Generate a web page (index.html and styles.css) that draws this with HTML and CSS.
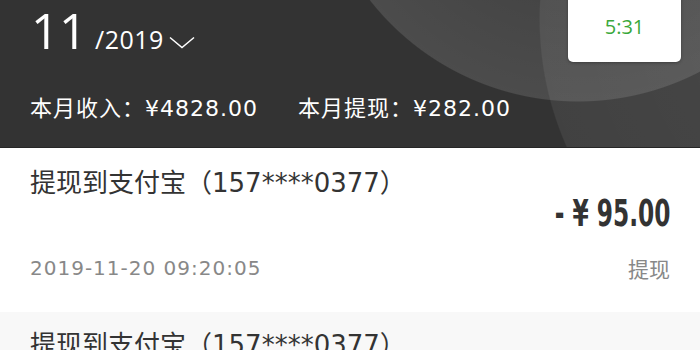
FILE: index.html
```html
<!DOCTYPE html>
<html lang="zh-CN">
<head>
<meta charset="utf-8">
<link rel="stylesheet" href="styles.css">
</head>
<body>
<div class="header">
  <div class="month-row">
    <span class="month">11</span>
    <span class="year">/2019</span>
    <svg class="chevron" width="26" height="13" viewBox="0 0 26 13"><path d="M1 1.5 L13 11.5 L25 1.5" fill="none" stroke="#fff" stroke-width="1.5"/></svg>
  </div>
  <div class="summary">
    <span>本月收入：¥4828.00</span>
    <span>本月提现：¥282.00</span>
  </div>
  <div class="time-card">5:31</div>
</div>
<div class="list">
  <div class="item">
    <div class="title">提现到支付宝（157****0377）</div>
    <div class="amount-row"><span class="amount">- ¥ 95.00</span></div>
    <div class="meta"><span class="date">2019-11-20 09:20:05</span><span class="type">提现</span></div>
  </div>
  <div class="item alt">
    <div class="title">提现到支付宝（157****0377）</div>
    <div class="amount-row"><span class="amount">- ¥ 95.00</span></div>
    <div class="meta"><span class="date">2019-11-20 09:20:05</span><span class="type">提现</span></div>
  </div>
</div>
</body>
</html>
```

FILE: styles.css
```css
html, body {
  margin: 0;
  padding: 0;
  background: #fff;
  font-family: "DejaVu Sans", "Noto Sans CJK SC", sans-serif;
  overflow: hidden;
}
.header {
  position: relative;
  height: 148px;
  box-sizing: border-box;
  border-bottom: 1px solid #262626;
  background:
    radial-gradient(circle 265px at 578px -163px, rgba(255,255,255,0.08) 50%, rgba(255,255,255,0.12) 99.6%, rgba(255,255,255,0) 100%),
    radial-gradient(circle 316px at 855px 19px, rgba(255,255,255,0.09) 40%, rgba(255,255,255,0.07) 99.6%, rgba(255,255,255,0) 100%),
    #333333;
  color: #fff;
  padding: 0 30px;
  display: flex;
  flex-direction: column;
}
.month-row {
  display: flex;
  align-items: baseline;
  height: 60px;
  font-family: "Open Sans", sans-serif;
}
.month {
  font-size: 49px;
  font-weight: 400;
  line-height: 60px;
  margin-left: 1px;
}
.year {
  font-size: 25px;
  font-weight: 400;
  letter-spacing: 0.5px;
  margin-left: 8px;
}
.chevron {
  margin-left: 5px;
  align-self: flex-end;
  margin-bottom: 11px;
}
.summary {
  display: flex;
  gap: 40px;
  font-size: 22px;
  letter-spacing: 1px;
  line-height: 30px;
  margin-top: 34px;
}
.time-card {
  position: absolute;
  top: -6px;
  left: 568px;
  width: 113px;
  height: 68px;
  background: #fff;
  border-radius: 5px;
  box-shadow: 0 1px 3px rgba(0,0,0,0.3);
  color: #39a83a;
  font-family: "Open Sans", sans-serif;
  font-size: 20px;
  display: flex;
  align-items: center;
  justify-content: center;
  padding-bottom: 4px;
  box-sizing: border-box;
}
.item {
  height: 164px;
  box-sizing: border-box;
  padding: 20px 30px 0 30px;
  display: flex;
  flex-direction: column;
  background: #fff;
}
.item.alt {
  background: #f8f8f8;
  padding-top: 18px;
}
.title {
  font-size: 26px;
  color: #333;
  line-height: 30px;
  white-space: nowrap;
}
.amount-row {
  display: flex;
  justify-content: flex-end;
  height: 36px;
  margin-top: -2px;
}
.amount {
  display: inline-block;
  font-family: "DejaVu Sans Condensed", "DejaVu Sans", sans-serif;
  font-stretch: condensed;
  font-weight: 700;
  font-size: 37px;
  color: #333;
  line-height: 36px;
  white-space: nowrap;
  transform: scaleX(0.7);
  transform-origin: right center;
}
.meta {
  display: flex;
  justify-content: space-between;
  align-items: center;
  margin-top: 24px;
  line-height: 24px;
  color: #888;
}
.date {
  font-size: 20px;
  letter-spacing: 1px;
}
.type {
  font-size: 21px;
  font-family: "Noto Sans CJK SC", sans-serif;
}
```
